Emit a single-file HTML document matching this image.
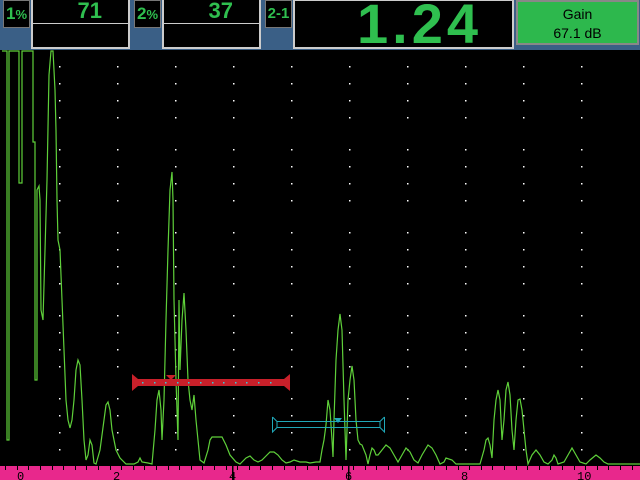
<!DOCTYPE html>
<html><head><style>
body{margin:0;width:640px;height:480px;overflow:hidden;background:#000;font-family:"Liberation Sans",sans-serif;position:relative}
.hdr{position:absolute;left:0;top:0;width:640px;height:50px;background:#3a5f86}
.b{position:absolute;background:#000;box-sizing:border-box}
.lab{border:1px solid #777;color:#2fbf4f;font-weight:bold;font-size:17px;text-align:center;line-height:26px}
.val{border:2px solid #ccc;border-top:none;color:#2fbf4f;font-size:22px;line-height:22px;text-align:right;padding-right:26px;font-weight:bold}
</style></head><body>
<div class="hdr"></div>
<div class="b lab" style="left:3px;top:0;width:27px;height:28px">1<span style="font-size:13px">%</span></div>
<div class="b val" style="left:31px;top:0;width:99px;height:25px">71</div>
<div class="b val" style="left:31px;top:23px;width:99px;height:26px;border-top:1px solid #ccc"></div>
<div class="b lab" style="left:134px;top:0;width:27px;height:28px">2<span style="font-size:13px">%</span></div>
<div class="b val" style="left:162px;top:0;width:99px;height:25px">37</div>
<div class="b val" style="left:162px;top:23px;width:99px;height:26px;border-top:1px solid #ccc"></div>
<div class="b lab" style="left:265px;top:0;width:27px;height:28px;font-size:15px">2-1</div>
<div class="b" style="left:293px;top:0;width:221px;height:49px;border:2px solid #ccc;border-top:1px solid #ccc;color:#2fbf4f;font-size:56px;font-weight:bold;line-height:46px;padding-left:62px;letter-spacing:4px">1.24</div>
<div class="b" style="left:516px;top:0;width:123px;height:45px;background:#2db84d;border:2px solid #888;color:#000;font-size:14px;text-align:center;line-height:19px;padding-top:3px">Gain<br>67.1 dB</div>
<svg width="640" height="480" style="position:absolute;left:0;top:0">
<defs>
<pattern id="hd" x="2" y="0" width="11.6" height="480" patternUnits="userSpaceOnUse"><rect width="1.5" height="1.5" fill="#fff" x="0" y="0"/></pattern>
</defs>
<g fill="#fff">
<rect x="0" y="132" width="640" height="2" fill="url(#hd)"/>
<rect x="0" y="215" width="640" height="2" fill="url(#hd)"/>
<rect x="0" y="298" width="640" height="2" fill="url(#hd)"/>
<rect x="0" y="381" width="640" height="2" fill="url(#hd)"/>
</g>
<g id="vd" fill="#fff">
<rect x="59" y="66" width="1.5" height="1.5"/><rect x="59" y="83" width="1.5" height="1.5"/><rect x="59" y="100" width="1.5" height="1.5"/><rect x="59" y="117" width="1.5" height="1.5"/>
<rect x="59" y="149" width="1.5" height="1.5"/><rect x="59" y="166" width="1.5" height="1.5"/><rect x="59" y="183" width="1.5" height="1.5"/><rect x="59" y="200" width="1.5" height="1.5"/>
<rect x="59" y="232" width="1.5" height="1.5"/><rect x="59" y="249" width="1.5" height="1.5"/><rect x="59" y="266" width="1.5" height="1.5"/><rect x="59" y="283" width="1.5" height="1.5"/>
<rect x="59" y="315" width="1.5" height="1.5"/><rect x="59" y="332" width="1.5" height="1.5"/><rect x="59" y="349" width="1.5" height="1.5"/><rect x="59" y="366" width="1.5" height="1.5"/>
<rect x="59" y="398" width="1.5" height="1.5"/><rect x="59" y="415" width="1.5" height="1.5"/><rect x="59" y="432" width="1.5" height="1.5"/><rect x="59" y="449" width="1.5" height="1.5"/>
</g>
<use href="#vd" x="58"/><use href="#vd" x="116"/><use href="#vd" x="174"/><use href="#vd" x="232"/><use href="#vd" x="290"/><use href="#vd" x="348"/><use href="#vd" x="406"/><use href="#vd" x="464"/><use href="#vd" x="522"/>
<polyline fill="none" stroke="#5fd03a" stroke-width="1.2" points="2,51 7,51 7,440 9,440 9,51 19,51 19,183 22,183 22,51 33,51 33,142 35,142 35,380 37,380 37,190 39,186 40,200 41,310 43,320 45,250 47,180 49,75 51,51 53,51 55,90 56,130 57,200 58,240 60,250 62,300 64,350 66,400 68,420 70,428 72,420 74,400 76,370 78,360 80,365 82,400 84,440 86,460 88,455 90,440 92,445 94,463 96,464 100,450 104,420 106,405 108,402 110,410 112,430 116,450 120,458 126,464 134,464 138,462 140,458 142,462 148,463 152,464 155,430 157,400 159,390 161,410 162,440 164,400 166,320 168,250 170,190 172,172 173,200 174,300 176,380 178,440 179,300 180,370 182,320 184,293 186,330 188,380 190,400 192,410 194,395 196,420 198,440 200,460 204,463 208,450 210,440 212,437 222,437 226,445 230,455 236,462 240,464 246,458 250,456 254,460 258,462 262,460 266,456 270,452 274,452 278,455 282,460 286,463 290,462 294,460 300,462 306,462 310,463 316,462 320,462 322,450 324,440 326,425 328,400 330,410 332,440 333,457 334,420 336,360 338,330 340,314 342,330 344,400 346,460 348,400 350,380 352,366 354,380 356,420 358,440 360,444 362,445 366,455 368,464 370,455 372,448 374,450 376,455 378,455 382,450 386,445 390,448 394,455 398,462 402,455 406,448 410,452 414,460 418,463 422,455 428,445 432,448 436,455 440,464 444,462 446,458 452,460 456,464 480,464 484,450 486,440 488,438 490,445 492,458 494,420 496,400 498,390 500,400 502,440 504,420 506,390 508,382 510,395 512,430 514,450 516,420 518,400 520,399 522,410 524,430 526,450 528,464 532,455 536,450 540,455 544,462 548,464 552,460 554,455 556,458 558,464 564,462 568,455 572,448 576,455 580,462 586,464 590,460 596,455 600,458 604,462 608,464 640,464"/>
<g fill="#c8202a">
<rect x="135" y="379" width="153" height="7"/>
<polygon points="132,374 138,379 138,386 132,391"/>
<polygon points="290,374 284,379 284,386 290,391"/>
<polygon points="166,375 176,375 171,380"/>
</g>
<g fill="#3cc8d8"><rect x="142" y="382" width="1.5" height="1.5"/><rect x="154" y="382" width="1.5" height="1.5"/><rect x="165" y="382" width="1.5" height="1.5"/><rect x="177" y="382" width="1.5" height="1.5"/><rect x="188" y="382" width="1.5" height="1.5"/><rect x="200" y="382" width="1.5" height="1.5"/><rect x="212" y="382" width="1.5" height="1.5"/><rect x="223" y="382" width="1.5" height="1.5"/><rect x="235" y="382" width="1.5" height="1.5"/><rect x="246" y="382" width="1.5" height="1.5"/><rect x="258" y="382" width="1.5" height="1.5"/><rect x="270" y="382" width="1.5" height="1.5"/></g>
<g stroke="#20a8b8" fill="none" stroke-width="1">
<line x1="277" y1="421.5" x2="380" y2="421.5"/><line x1="277" y1="427.5" x2="380" y2="427.5"/>
<polyline points="272.5,417 277,421.5 277,427.5 272.5,432 272.5,417"/>
<polyline points="384.5,417 380,421.5 380,427.5 384.5,432 384.5,417"/>
</g>
<polygon points="334,418 342,418 338,423" fill="#20a8b8"/>
<rect x="0" y="466" width="640" height="14" fill="#e8288c"/>
<g fill="#000">
<rect x="232" y="466" width="1.5" height="14"/><rect x="348" y="466" width="1.5" height="14"/>
</g>
<g id="tk" fill="#000"><rect x="5" y="466" width="1" height="4"/><rect x="17" y="466" width="1" height="4"/><rect x="28" y="466" width="1" height="4"/><rect x="40" y="466" width="1" height="4"/><rect x="52" y="466" width="1" height="4"/><rect x="63" y="466" width="1" height="4"/><rect x="75" y="466" width="1" height="4"/><rect x="86" y="466" width="1" height="4"/><rect x="98" y="466" width="1" height="4"/><rect x="110" y="466" width="1" height="4"/></g>
<use href="#tk" x="116"/><use href="#tk" x="232"/><use href="#tk" x="348"/><use href="#tk" x="464"/><use href="#tk" x="580"/>
<g font-family="Liberation Mono,monospace" font-size="12" fill="#000">
<text x="17" y="480">0</text><text x="113" y="480">2</text><text x="229" y="480">4</text><text x="345" y="480">6</text><text x="461" y="480">8</text><text x="577" y="480">10</text>
</g>
</svg>
</body></html>
